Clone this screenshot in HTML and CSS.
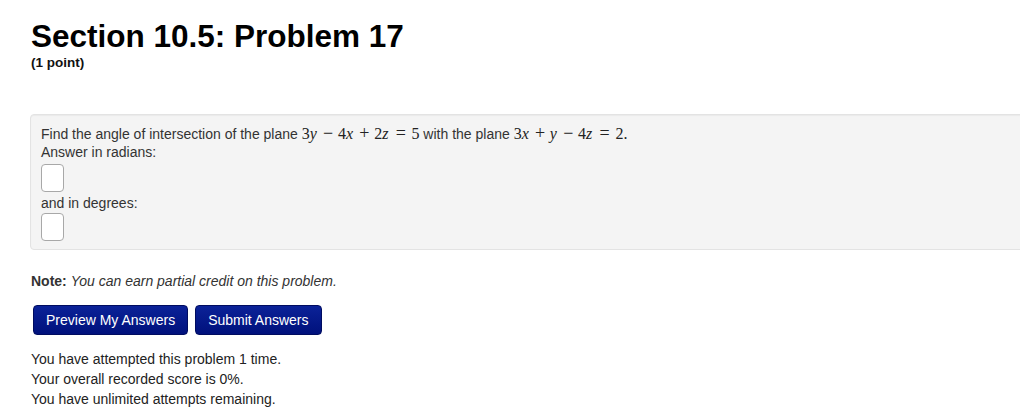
FILE: index.html
```html
<!DOCTYPE html>
<html lang="en">
<head>
<meta charset="utf-8">
<title>Section 10.5: Problem 17</title>
<link rel="stylesheet" href="styles.css">
</head>
<body>
<div class="page">
  <h2 class="title">Section 10.5: Problem 17</h2>
  <div class="points">(1 point)</div>

  <div class="well">
    <div class="line">Find the angle of intersection of the plane <span class="math"><span class="mn">3</span><span class="mi">y</span><span class="mo">−</span><span class="mn">4</span><span class="mi">x</span><span class="mo">+</span><span class="mn">2</span><span class="mi">z</span><span class="mrel">=</span><span class="mn">5</span></span> with the plane <span class="math"><span class="mn">3</span><span class="mi">x</span><span class="mo">+</span><span class="mi">y</span><span class="mo">−</span><span class="mn">4</span><span class="mi">z</span><span class="mrel">=</span><span class="mn">2.</span></span></div>
    <div class="line">Answer in radians:</div>
    <input class="answer answer-first" type="text" aria-label="Answer in radians">
    <div class="line">and in degrees:</div>
    <input class="answer answer-second" type="text" aria-label="Answer in degrees">
  </div>

  <p class="note"><b>Note:</b> <i>You can earn partial credit on this problem.</i></p>

  <div class="actions">
    <button class="btn" type="button">Preview My Answers</button>
    <button class="btn" type="button">Submit Answers</button>
  </div>

  <div class="status">
    <div>You have attempted this problem 1 time.</div>
    <div>Your overall recorded score is 0%.</div>
    <div>You have unlimited attempts remaining.</div>
  </div>
</div>
</body>
</html>
```

FILE: styles.css
```css
html, body {
  margin: 0;
  padding: 0;
  overflow: hidden;
  background: #fff;
}

body {
  font-family: "Liberation Sans", Arial, sans-serif;
  font-size: 14px;
  line-height: 20px;
  color: #333;
}

.page {
  padding: 18px 0 0 30px;
}

.title {
  margin: 0 0 0 1px;
  font-size: 31.5px;
  line-height: 36px;
  font-weight: bold;
  color: #000;
}

.points {
  margin-left: 1px;
  font-size: 13.5px;
  line-height: 18px;
  font-weight: bold;
  color: #111;
}

.well {
  margin-top: 42px;
  width: 1010px;
  box-sizing: border-box;
  padding: 10px 10px 8px 10px;
  background: #f4f4f4;
  border: 1px solid #e3e3e3;
  border-radius: 4px;
  box-shadow: inset 0 1px 1px rgba(0, 0, 0, 0.04);
}

.well .line {
  line-height: 18px;
}

.math {
  font-family: "Liberation Serif", "Times New Roman", serif;
  font-size: 16px;
  line-height: 16px;
  color: #222;
}

.mi {
  font-style: italic;
  padding-right: 0.1em;
}

.mo,
.mrel {
  display: inline-block;
  width: 12.5px;
  font-size: 18px;
  line-height: 16px;
  text-align: center;
}

.mo {
  margin: 0 3.5px;
}

.mrel {
  margin: 0 4.5px;
}

.answer {
  display: block;
  width: 23px;
  height: 28px;
  box-sizing: border-box;
  padding: 0;
  border: 1px solid #a8a8a8;
  border-radius: 4px;
  background: #fff;
}

.answer-first {
  margin: 3px 0 2px 0;
}

.answer-second {
  margin: 1px 0 0 0;
}

.note {
  margin: 21px 0 0 1px;
}

.actions {
  display: flex;
  gap: 7px;
  margin: 14px 0 0 3px;
}

.btn {
  height: 30px;
  box-sizing: border-box;
  padding: 0 12px;
  font-family: "Liberation Sans", Arial, sans-serif;
  font-size: 14px;
  color: #fff;
  background: linear-gradient(#0b2298, #00117c);
  border: 1px solid #000c60;
  border-radius: 4px;
  cursor: pointer;
}

.status {
  margin: 14px 0 0 1px;
  color: #222;
}
```
